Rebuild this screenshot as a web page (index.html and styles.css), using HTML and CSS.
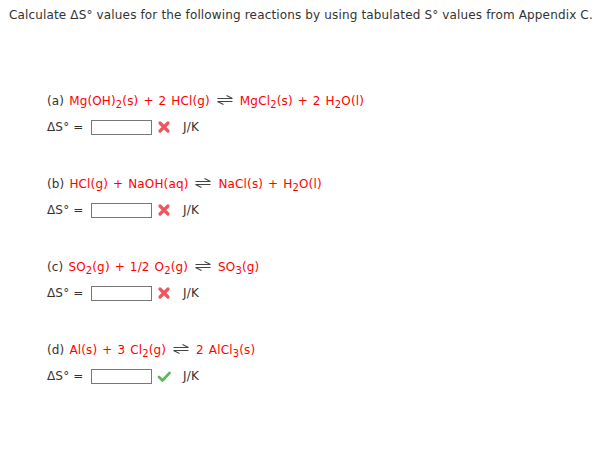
FILE: index.html
```html
<!DOCTYPE html>
<html>
<head>
<meta charset="utf-8">
<link rel="stylesheet" href="styles.css">
</head>
<body>
<p class="title">Calculate &Delta;S&deg; values for the following reactions by using tabulated S&deg; values from Appendix C.</p>
<div class="parts">
  <div class="part">
    <div class="rxn"><span class="lbl">(a)</span> <span class="chem">Mg(OH)<sub>2</sub>(s) + 2 HCl(g) <svg class="eq" width="16" height="10" viewBox="0 0 16 10"><path d="M0.5 3.5H15.5M15.5 3.5L9.5 0.5M15.5 6.5H0.5M0.5 6.5L6.5 9.5" fill="none" stroke="#444" stroke-width="1.1"/></svg> MgCl<sub>2</sub>(s) + 2 H<sub>2</sub>O(l)</span></div>
    <div class="ans"><span class="ds">&Delta;S&deg; =</span><span class="box"></span><svg class="mark" width="14" height="14" viewBox="0 0 14 14"><path d="M3 3L11 11M11 3L3 11" stroke="#f0545d" stroke-width="3.2" stroke-linecap="round"/></svg><span class="unit">J/K</span></div>
  </div>
  <div class="part">
    <div class="rxn"><span class="lbl">(b)</span> <span class="chem">HCl(g) + NaOH(aq) <svg class="eq" width="16" height="10" viewBox="0 0 16 10"><path d="M0.5 3.5H15.5M15.5 3.5L9.5 0.5M15.5 6.5H0.5M0.5 6.5L6.5 9.5" fill="none" stroke="#444" stroke-width="1.1"/></svg> NaCl(s) + H<sub>2</sub>O(l)</span></div>
    <div class="ans"><span class="ds">&Delta;S&deg; =</span><span class="box"></span><svg class="mark" width="14" height="14" viewBox="0 0 14 14"><path d="M3 3L11 11M11 3L3 11" stroke="#f0545d" stroke-width="3.2" stroke-linecap="round"/></svg><span class="unit">J/K</span></div>
  </div>
  <div class="part">
    <div class="rxn"><span class="lbl">(c)</span> <span class="chem">SO<sub>2</sub>(g) + 1/2 O<sub>2</sub>(g) <svg class="eq" width="16" height="10" viewBox="0 0 16 10"><path d="M0.5 3.5H15.5M15.5 3.5L9.5 0.5M15.5 6.5H0.5M0.5 6.5L6.5 9.5" fill="none" stroke="#444" stroke-width="1.1"/></svg> SO<sub>3</sub>(g)</span></div>
    <div class="ans"><span class="ds">&Delta;S&deg; =</span><span class="box"></span><svg class="mark" width="14" height="14" viewBox="0 0 14 14"><path d="M3 3L11 11M11 3L3 11" stroke="#f0545d" stroke-width="3.2" stroke-linecap="round"/></svg><span class="unit">J/K</span></div>
  </div>
  <div class="part">
    <div class="rxn"><span class="lbl">(d)</span> <span class="chem">Al(s) + 3 Cl<sub>2</sub>(g) <svg class="eq" width="16" height="10" viewBox="0 0 16 10"><path d="M0.5 3.5H15.5M15.5 3.5L9.5 0.5M15.5 6.5H0.5M0.5 6.5L6.5 9.5" fill="none" stroke="#444" stroke-width="1.1"/></svg> 2 AlCl<sub>3</sub>(s)</span></div>
    <div class="ans"><span class="ds">&Delta;S&deg; =</span><span class="box"></span><svg class="mark" width="14" height="14" viewBox="0 0 14 14"><path d="M2 8L5.5 11.5L12.5 4" fill="none" stroke="#5cb85c" stroke-width="2.6" stroke-linecap="round" stroke-linejoin="round"/></svg><span class="unit">J/K</span></div>
  </div>
</div>
</body>
</html>
```
FILE: styles.css
```css
html, body { margin: 0; padding: 0; background: #fff; }
body {
  font-family: "DejaVu Sans", Verdana, sans-serif;
  font-size: 12px;
  letter-spacing: 0.15px;
  color: #333;
}
.title { margin: 0; padding: 8px 0 0 9px; line-height: 15px; }
.parts { padding: 70px 0 0 47px; display: flex; flex-direction: column; gap: 41px; }
.part { display: flex; flex-direction: column; gap: 10px; }
.rxn { line-height: 16px; height: 16px; white-space: nowrap; word-spacing: 1px; }
.chem { color: #ff0000; }
sub { font-size: 10px; vertical-align: -3px; line-height: 0; }
.eq { vertical-align: 0; margin: 0 2px; }
.ans { display: flex; align-items: center; height: 16px; }
.ds { width: 44px; }
.box { width: 59px; height: 13px; border: 1px solid #777; background: #fff; }
.mark { margin-left: 5px; }
.unit { margin-left: 12px; color: #333; }
```
